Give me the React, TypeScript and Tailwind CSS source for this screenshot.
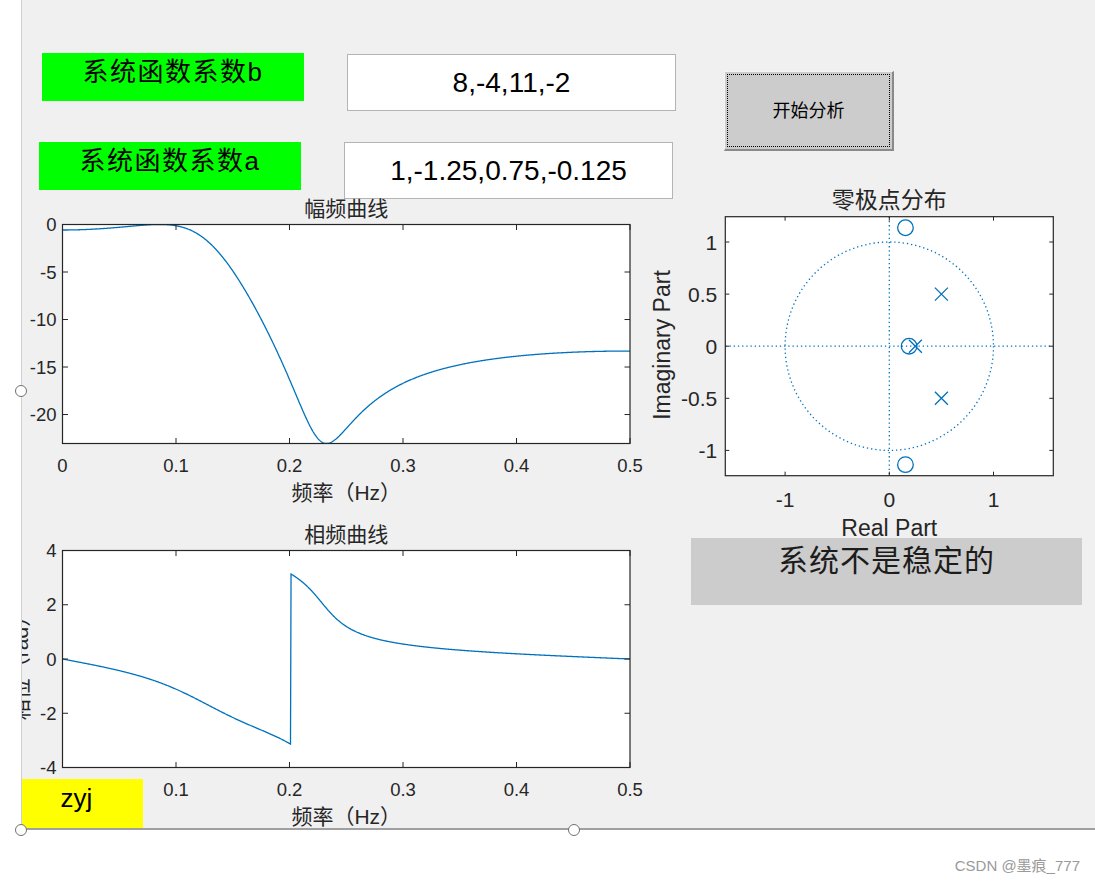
import React from 'react';

const B = [8, -4, 11, -2];
const A = [1, -1.25, 0.75, -0.125];
const BLUE = '#0072BD';
const INK = '#262626';
const SANS = "'Liberation Sans', Arial, 'Noto Sans CJK SC', sans-serif";
const CJK = "'Noto Sans CJK SC', 'Liberation Sans', sans-serif";

// H(e^jw) = B/A, f in Hz with fs = 1
function freqResponse(n: number) {
  const f: number[] = [];
  const mag: number[] = [];
  const ph: number[] = [];
  for (let i = 0; i < n; i++) {
    const fi = (0.5 * i) / (n - 1);
    const w = 2 * Math.PI * fi;
    let br = 0, bi = 0, ar = 0, ai = 0;
    B.forEach((v, k) => { br += v * Math.cos(w * k); bi -= v * Math.sin(w * k); });
    A.forEach((v, k) => { ar += v * Math.cos(w * k); ai -= v * Math.sin(w * k); });
    const d = ar * ar + ai * ai;
    const hr = (br * ar + bi * ai) / d;
    const hi = (bi * ar - br * ai) / d;
    f.push(fi);
    mag.push(Math.hypot(hr, hi));
    ph.push(Math.atan2(hi, hr));
  }
  const max = Math.max(...mag);
  const db = mag.map((m) => 20 * Math.log10(m / max));
  return { f, db, ph };
}

const resp = freqResponse(1024);
const dbMin = Math.min(...resp.db);

const zeros: [number, number][] = [[0.1899, 0], [0.155, 1.1369], [0.155, -1.1369]];
const poles: [number, number][] = [[0.25, 0], [0.5, 0.5], [0.5, -0.5]];

type Box = { x: number; y: number; w: number; h: number };
type Scale = (v: number) => number;

type AxesProps = {
  id: string;
  width: number;
  height: number;
  box: Box;
  xlim: [number, number];
  ylim: [number, number];
  xticks: number[];
  yticks: number[];
  tickSize: number;
  labelSize: number;
  tickLen: number;
  xTickDy: number;
  yTickDx: number;
  yTickDy: number;
  title: string;
  titleDy: number;
  xlabel?: string;
  xlabelDy?: number;
  ylabel?: string;
  ylabelX?: number;
  ylabelY?: number;
  children: (sx: Scale, sy: Scale) => React.ReactNode;
};

function Axes(p: AxesProps) {
  const { box } = p;
  const sx: Scale = (v) => box.x + ((v - p.xlim[0]) / (p.xlim[1] - p.xlim[0])) * box.w;
  const sy: Scale = (v) => box.y + box.h - ((v - p.ylim[0]) / (p.ylim[1] - p.ylim[0])) * box.h;
  const bottom = box.y + box.h;
  const right = box.x + box.w;
  const cx = box.x + box.w / 2;
  return (
    <svg width={p.width} height={p.height} className="block shrink-0 overflow-visible">
      <defs>
        <clipPath id={p.id}>
          <rect x={box.x} y={box.y} width={box.w} height={box.h} />
        </clipPath>
      </defs>
      <rect x={box.x} y={box.y} width={box.w} height={box.h} fill="#ffffff" />
      <g clipPath={`url(#${p.id})`}>{p.children(sx, sy)}</g>
      <g stroke={INK} strokeWidth={1}>
        {p.xticks.map((v) => (
          <g key={`x${v}`}>
            <line x1={sx(v)} x2={sx(v)} y1={bottom} y2={bottom - p.tickLen} />
            <line x1={sx(v)} x2={sx(v)} y1={box.y} y2={box.y + p.tickLen} />
          </g>
        ))}
        {p.yticks.map((v) => (
          <g key={`y${v}`}>
            <line x1={box.x} x2={box.x + p.tickLen} y1={sy(v)} y2={sy(v)} />
            <line x1={right} x2={right - p.tickLen} y1={sy(v)} y2={sy(v)} />
          </g>
        ))}
        <rect x={box.x} y={box.y} width={box.w} height={box.h} fill="none" strokeWidth={1.2} />
      </g>
      <g fill={INK} fontFamily={SANS} fontSize={p.tickSize}>
        {p.xticks.map((v) => (
          <text key={`xl${v}`} x={sx(v)} y={bottom + p.xTickDy} textAnchor="middle">
            {String(v)}
          </text>
        ))}
        {p.yticks.map((v) => (
          <text key={`yl${v}`} x={box.x - p.yTickDx} y={sy(v) + p.yTickDy} textAnchor="end">
            {String(v)}
          </text>
        ))}
      </g>
      <g fill={INK} fontSize={p.labelSize}>
        <text x={cx} y={box.y - p.titleDy} textAnchor="middle" fontFamily={CJK}>
          {p.title}
        </text>
        {p.xlabel && (
          <text x={cx} y={bottom + (p.xlabelDy ?? 0)} textAnchor="middle" fontFamily={SANS}>
            {p.xlabel}
          </text>
        )}
        {p.ylabel && (
          <text
            transform={`translate(${p.ylabelX} ${p.ylabelY}) rotate(-90)`}
            textAnchor="middle"
            fontFamily={SANS}
          >
            {p.ylabel}
          </text>
        )}
      </g>
    </svg>
  );
}

function line(xs: number[], ys: number[], sx: Scale, sy: Scale) {
  return xs.map((x, i) => `${sx(x).toFixed(2)},${sy(ys[i]).toFixed(2)}`).join(' ');
}

function MagnitudePlot() {
  return (
    <Axes
      id="clip-mag"
      width={625}
      height={311}
      box={{ x: 40.5, y: 25.5, w: 567.5, h: 219 }}
      xlim={[0, 0.5]}
      ylim={[dbMin, 0]}
      xticks={[0, 0.1, 0.2, 0.3, 0.4, 0.5]}
      yticks={[-20, -15, -10, -5, 0]}
      tickSize={18.5}
      labelSize={21}
      tickLen={5.5}
      xTickDy={28.5}
      yTickDx={6}
      yTickDy={6.5}
      title="幅频曲线"
      titleDy={8.5}
      xlabel="频率（Hz）"
      xlabelDy={56}
    >
      {(sx, sy) => (
        <polyline points={line(resp.f, resp.db, sx, sy)} fill="none" stroke={BLUE} strokeWidth={1.3} />
      )}
    </Axes>
  );
}

function PhasePlot() {
  return (
    <Axes
      id="clip-phase"
      width={625}
      height={318}
      box={{ x: 40.5, y: 40.5, w: 567.5, h: 217 }}
      xlim={[0, 0.5]}
      ylim={[-4, 4]}
      xticks={[0, 0.1, 0.2, 0.3, 0.4, 0.5]}
      yticks={[-4, -2, 0, 2, 4]}
      tickSize={18.5}
      labelSize={21}
      tickLen={5.5}
      xTickDy={28.5}
      yTickDx={6}
      yTickDy={6.5}
      title="相频曲线"
      titleDy={8.5}
      xlabel="频率（Hz）"
      xlabelDy={56}
      ylabel="相位（rad）"
      ylabelX={6}
      ylabelY={153}
    >
      {(sx, sy) => (
        <polyline points={line(resp.f, resp.ph, sx, sy)} fill="none" stroke={BLUE} strokeWidth={1.3} />
      )}
    </Axes>
  );
}

function ZPlanePlot() {
  const box = { x: 78.3, y: 36.7, w: 328, h: 259 };
  const k = 104.2;
  const xr = box.w / 2 / k;
  const yr = box.h / 2 / k;
  return (
    <Axes
      id="clip-zp"
      width={448}
      height={358}
      box={box}
      xlim={[-xr, xr]}
      ylim={[-yr, yr]}
      xticks={[-1, 0, 1]}
      yticks={[-1, -0.5, 0, 0.5, 1]}
      tickSize={21}
      labelSize={23}
      tickLen={4}
      xTickDy={31}
      yTickDx={8}
      yTickDy={7.5}
      title="零极点分布"
      titleDy={9}
      xlabel="Real Part"
      xlabelDy={60}
      ylabel="Imaginary Part"
      ylabelX={23}
      ylabelY={165}
    >
      {(sx, sy) => (
        <g stroke={BLUE} fill="none" strokeWidth={1.3}>
          <g strokeDasharray="1.3 2.9">
            <circle cx={sx(0)} cy={sy(0)} r={k} />
            <line x1={box.x} x2={box.x + box.w} y1={sy(0)} y2={sy(0)} />
            <line x1={sx(0)} x2={sx(0)} y1={box.y} y2={box.y + box.h} />
          </g>
          {zeros.map(([re, im], i) => (
            <circle key={`z${i}`} cx={sx(re)} cy={sy(im)} r={7.8} />
          ))}
          {poles.map(([re, im], i) => (
            <path
              key={`p${i}`}
              d={`M${sx(re) - 6.5} ${sy(im) - 6.5}L${sx(re) + 6.5} ${sy(im) + 6.5}M${sx(re) - 6.5} ${sy(im) + 6.5}L${sx(re) + 6.5} ${sy(im) - 6.5}`}
            />
          ))}
        </g>
      )}
    </Axes>
  );
}

function GreenLabel({ text, className }: { text: string; className: string }) {
  return (
    <div
      className={`shrink-0 w-[262px] h-[48px] bg-[#00ff00] flex justify-center pt-[6px] text-[26px] leading-none tracking-[1.5px] text-black ${className}`}
      style={{ fontFamily: SANS }}
    >
      {text}
    </div>
  );
}

function EditBox({ value, className }: { value: string; className: string }) {
  return (
    <div
      className={`shrink-0 w-[329px] h-[57px] bg-white border border-[#b4b4b4] flex items-center justify-center text-[28px] text-black ${className}`}
      style={{ fontFamily: SANS }}
    >
      {value}
    </div>
  );
}

function Handle({ className }: { className: string }) {
  return <div className={`absolute w-[12px] h-[12px] rounded-full bg-white border border-[#707070] ${className}`} />;
}

export default function App() {
  return (
    <div className="relative w-[1095px] h-[885px] bg-white overflow-hidden">
      <div className="relative ml-[21px] h-[830px] bg-[#f0f0f0] border-l border-l-[#d0d0d0] border-b-2 border-b-[#a0a0a0] flex overflow-hidden">
        {/* left column: coefficient inputs + response plots */}
        <div className="w-[625px] shrink-0 flex flex-col">
          <div className="flex items-start pt-[53px]">
            <GreenLabel text="系统函数系数b" className="ml-[20px]" />
            <EditBox value="8,-4,11,-2" className="ml-[43px] mt-[1px]" />
          </div>
          <div className="flex items-start mt-[31px]">
            <GreenLabel text="系统函数系数a" className="ml-[17px]" />
            <EditBox value="1,-1.25,0.75,-0.125" className="ml-[43px]" />
          </div>
          <MagnitudePlot />
          <PhasePlot />
        </div>

        {/* right column: button, pole-zero plot, result */}
        <div className="flex-1 flex flex-col">
          <button
            className="ml-[77px] mt-[71px] w-[170px] h-[80px] bg-[#cccccc] border-t border-l border-t-[#f4f4f4] border-l-[#f4f4f4] border-r-2 border-b-2 border-r-[#8a8a8a] border-b-[#8a8a8a] p-[2px]"
            style={{ fontFamily: CJK }}
          >
            <div className="w-full h-full border border-dotted border-black flex items-center justify-center pb-[2px] text-[18px] text-black">
              开始分析
            </div>
          </button>
          <div className="mt-[29px]">
            <ZPlanePlot />
          </div>
          <div
            className="ml-[44px] w-[391px] h-[67px] bg-[#cccccc] flex justify-center pt-[5px] text-[30px] leading-none tracking-[1px] text-[#1c1c1c]"
            style={{ fontFamily: CJK }}
          >
            系统不是稳定的
          </div>
        </div>

        <div
          className="absolute left-0 bottom-0 w-[121px] h-[49px] bg-[#ffff00] flex justify-center pt-[6px] pr-[12px] text-[26px] leading-none text-black"
          style={{ fontFamily: SANS }}
        >
          zyj
        </div>
      </div>

      <Handle className="left-[15px] top-[385px]" />
      <Handle className="left-[15px] top-[824px]" />
      <Handle className="left-[568px] top-[824px]" />

      <div className="flex justify-end pr-[15px] pt-[28px]">
        <span className="text-[15px] leading-none text-[#9a9a9a]" style={{ fontFamily: SANS }}>
          CSDN @墨痕_777
        </span>
      </div>
    </div>
  );
}
